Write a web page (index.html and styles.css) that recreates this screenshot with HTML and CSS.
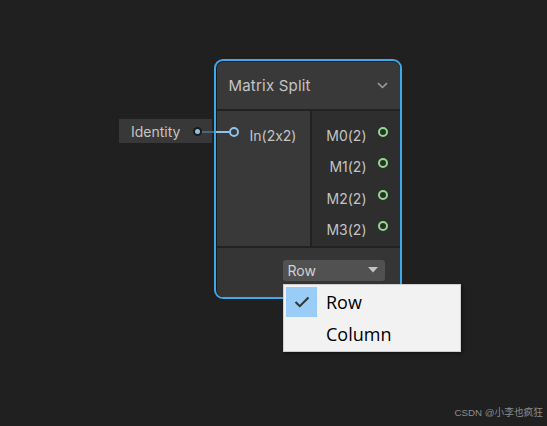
FILE: index.html
```html
<!DOCTYPE html>
<html>
<head>
<meta charset="utf-8">
<link rel="stylesheet" href="styles.css">
</head>
<body>
<div class="canvas">
  <div class="identity">
    <span class="identity-label">Identity</span>
    <span class="out-dot"></span>
    <span class="wire-grey"></span>
  </div>
  <div class="node">
    <div class="inner">
      <div class="header">
        <span class="title">Matrix Split</span>
        <svg class="chev" width="11" height="7" viewBox="0 0 11 7"><path d="M1 1.2 L5.5 5.5 L10 1.2" fill="none" stroke="#9a9a9a" stroke-width="1.6"/></svg>
      </div>
      <div class="body">
        <div class="col-in">
          <div class="row-in"><span class="port port-in"></span><span class="lbl">In(2x2)</span></div>
        </div>
        <div class="col-out">
          <div class="row-out"><span class="lbl">M0(2)</span><span class="port port-out"></span></div>
          <div class="row-out"><span class="lbl">M1(2)</span><span class="port port-out"></span></div>
          <div class="row-out"><span class="lbl">M2(2)</span><span class="port port-out"></span></div>
          <div class="row-out"><span class="lbl">M3(2)</span><span class="port port-out"></span></div>
        </div>
      </div>
      <div class="footer">
        <div class="dropdown">
          <span>Row</span>
          <svg width="10" height="6" viewBox="0 0 10 6"><path d="M0 0 H10 L5 5.5 Z" fill="#c4c4c4"/></svg>
        </div>
      </div>
    </div>
  </div>
  <span class="wire-blue"></span>
  <div class="menu">
    <div class="item">
      <span class="check"><svg width="16" height="12" viewBox="0 0 16 12"><path d="M1.5 6 L5.8 10.2 L14.5 1.5" fill="none" stroke="#333" stroke-width="2"/></svg></span>
      <span class="item-text">Row</span>
    </div>
    <div class="item">
      <span class="check blank"></span>
      <span class="item-text">Column</span>
    </div>
  </div>
  <div class="watermark">CSDN @小李也疯狂</div>
</div>
</body>
</html>
```
FILE: styles.css
```css
html, body {
  margin: 0;
  padding: 0;
  background: #202020;
}
.canvas {
  position: relative;
  width: 547px;
  height: 426px;
  overflow: hidden;
  background: #202020;
  font-family: Inter, "Noto Sans", sans-serif;
  font-feature-settings: "calt" 0;
}
.identity {
  position: absolute;
  left: 119px;
  top: 119px;
  height: 24px;
  width: 95px;
  display: flex;
  align-items: center;
}
.identity-label {
  box-sizing: border-box;
  height: 24px;
  width: 93px;
  background: #383838;
  color: #c4c4c4;
  font-size: 14px;
  line-height: 25px;
  padding-left: 12px;
}
.out-dot {
  position: absolute;
  left: 74px;
  top: 8px;
  width: 9px;
  height: 9px;
  border-radius: 50%;
  background: #1b1b1b;
  display: flex;
  align-items: center;
  justify-content: center;
}
.out-dot::after {
  content: "";
  width: 5px;
  height: 5px;
  border-radius: 50%;
  background: #8cc1e6;
}
.wire-grey {
  position: absolute;
  left: 83px;
  top: 12px;
  width: 12px;
  height: 2px;
  background: #4e6574;
}
.wire-blue {
  position: absolute;
  left: 216px;
  top: 131px;
  width: 13px;
  height: 2px;
  background: #8cc4ec;
}
.node {
  position: absolute;
  left: 214px;
  top: 59px;
  width: 188px;
  height: 240px;
  box-sizing: border-box;
  border: 2.5px solid #3fa8ea;
  border-radius: 9px;
  padding: 0.5px;
  background: #1a1a1a;
}
.inner {
  height: 100%;
  display: flex;
  flex-direction: column;
  gap: 2px;
  border-radius: 6px;
  overflow: hidden;
  background: #222222;
}
.header {
  height: 47px;
  flex: none;
  background: #393939;
  display: flex;
  align-items: center;
  justify-content: space-between;
  padding: 0 12px 0 12px;
}
.title {
  color: #c4c4c4;
  font-size: 15px;
  letter-spacing: 0.2px;
}
.chev {
  margin-top: 1px;
}
.body {
  height: 135px;
  flex: none;
  display: flex;
  gap: 2px;
}
.col-in {
  width: 93px;
  background: #393939;
  padding-top: 7px;
  box-sizing: border-box;
}
.col-out {
  flex: 1;
  background: #2e2e2e;
  padding-top: 7px;
  padding-right: 12px;
  box-sizing: border-box;
}
.row-in, .row-out {
  height: 31.5px;
  display: flex;
  align-items: center;
  color: #c4c4c4;
  font-size: 14px;
}
.row-in {
  padding-left: 12px;
  gap: 11px;
}
.row-in .lbl {
  margin-top: 4px;
}
.row-out {
  justify-content: flex-end;
  gap: 11px;
}
.row-out .lbl {
  margin-top: 4px;
}
.port {
  box-sizing: border-box;
  width: 10px;
  height: 10px;
  border-radius: 50%;
  border: 2px solid #8cc4ec;
  margin-top: -3px;
}
.port-out {
  border-color: #8edc8a;
}
.footer {
  flex: 1;
  background: #353535;
  padding-left: 66px;
  padding-top: 12px;
}
.dropdown {
  box-sizing: border-box;
  width: 102px;
  height: 21px;
  background: #515151;
  border-radius: 3px;
  display: flex;
  align-items: center;
  justify-content: space-between;
  padding: 0 7px 0 5px;
  color: #d2d2d2;
  font-size: 14px;
}
.menu {
  position: absolute;
  left: 283px;
  top: 284px;
  width: 178px;
  height: 68px;
  box-sizing: border-box;
  background: #f2f2f2;
  border: 1px solid #cfcfcf;
  box-shadow: 2px 2px 3px rgba(0,0,0,0.35);
  padding: 2px 2px;
  display: flex;
  flex-direction: column;
  gap: 1px;
}
.item {
  height: 31px;
  display: flex;
  align-items: center;
  gap: 9px;
}
.check {
  width: 31px;
  height: 30px;
  background: #99ccf7;
  display: flex;
  align-items: center;
  justify-content: center;
}
.check.blank {
  background: transparent;
}
.item-text {
  font-family: "Open Sans", "Noto Sans", sans-serif;
  font-size: 18px;
  color: #000;
}
.watermark {
  position: absolute;
  right: 4px;
  top: 405px;
  color: #8c8c8c;
  font-size: 9.7px;
  font-family: "Liberation Sans", "Noto Sans CJK SC", sans-serif;
  white-space: nowrap;
}
```
